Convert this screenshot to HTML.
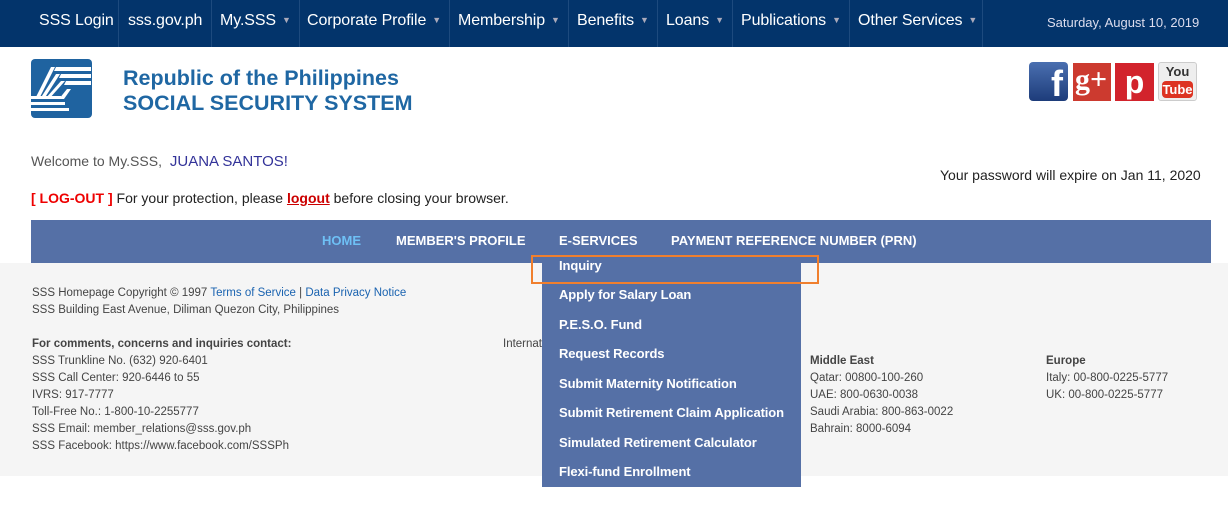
<!DOCTYPE html>
<html><head><meta charset="utf-8"><style>
*{margin:0;padding:0;box-sizing:border-box}
body{width:1228px;height:506px;background:#fff;font-family:"Liberation Sans",Arial,sans-serif;position:relative;overflow:hidden}
.a{position:absolute;white-space:nowrap}
#top{position:absolute;left:0;top:0;width:1228px;height:47px;background:#03346b}
.ni{position:absolute;top:0;height:47px;line-height:41px;color:#fff;font-size:16px;padding-left:0;letter-spacing:-0.1px}
.sep{position:absolute;top:0;width:1px;height:47px;background:#1d4a7e}
.car{font-size:9px;color:#aab;margin-left:6px;vertical-align:2px}
#foot{position:absolute;left:0;top:263px;width:1228px;height:213px;background:#f5f5f5}
.f{font-size:11.5px;color:#444;line-height:17px}
.mb{position:absolute;color:#fff;font-weight:bold;font-size:13px;top:233px}
.dd{position:absolute;left:559px;color:#fff;font-weight:bold;font-size:13px;letter-spacing:-0.1px}
</style></head><body>
<div id="top">
<span class="ni" style="left:39px">SSS Login</span>
<div class="sep" style="left:118px"></div>
<span class="ni" style="left:128px">sss.gov.ph</span>
<div class="sep" style="left:211px"></div>
<span class="ni" style="left:220px">My.SSS<span class="car">▼</span></span>
<div class="sep" style="left:299px"></div>
<span class="ni" style="left:307px">Corporate Profile<span class="car">▼</span></span>
<div class="sep" style="left:449px"></div>
<span class="ni" style="left:458px">Membership<span class="car">▼</span></span>
<div class="sep" style="left:568px"></div>
<span class="ni" style="left:577px">Benefits<span class="car">▼</span></span>
<div class="sep" style="left:657px"></div>
<span class="ni" style="left:666px">Loans<span class="car">▼</span></span>
<div class="sep" style="left:732px"></div>
<span class="ni" style="left:741px">Publications<span class="car">▼</span></span>
<div class="sep" style="left:849px"></div>
<span class="ni" style="left:858px">Other Services<span class="car">▼</span></span>
<div class="sep" style="left:982px"></div>
<span class="a" style="left:1047px;top:15px;color:#dde;font-size:13px">Saturday, August 10, 2019</span>
</div>
<svg class="a" style="left:31px;top:59px" width="61" height="59" viewBox="0 0 61 59">
<rect width="61" height="59" rx="4" fill="#1f63a0"/>
<g fill="#fff"><polygon points="25,8 60,8 60,12 23,12"/><polygon points="30,15 60,15 60,19 28,19"/><polygon points="35,22 60,22 60,26 33,26"/>
<polygon points="20,8 24,8 8,40 4,40"/><polygon points="25,15 29,15 13,40 9,40"/><polygon points="30,22 34,22 18,40 14,40"/>
<rect x="0" y="37" width="30" height="3"/><rect x="0" y="43" width="34" height="3"/><rect x="0" y="49" width="38" height="3"/>
<polygon points="28,40 33,40 40,30 36,30"/></g></svg>
<span class="a" style="left:123px;top:66px;color:#1f67a3;font-size:21.5px;font-weight:bold">Republic of the Philippines</span>
<span class="a" style="left:123px;top:91px;color:#1f67a3;font-size:21.5px;font-weight:bold">SOCIAL SECURITY SYSTEM</span>
<div class="a" style="left:1029px;top:62px;width:39px;height:39px;border-radius:4px;background:linear-gradient(#4a6fb0,#1d3c7a);color:#fff;font-size:36px;font-weight:bold;text-align:right;padding-right:5px;line-height:44px;overflow:hidden">f</div>
<div class="a" style="left:1073px;top:63px;width:38px;height:38px;background:#cc3a2f;color:#fff;font-size:30px;font-weight:bold;line-height:34px;font-family:'Liberation Serif',serif;padding-left:2px">g+</div>
<div class="a" style="left:1115px;top:63px;width:39px;height:38px;background:#d2232c;color:#fff;font-size:32px;font-weight:bold;line-height:38px;text-align:center">p</div>
<div class="a" style="left:1158px;top:62px;width:39px;height:39px;background:#eee;border:1px solid #ccc;border-radius:3px;text-align:center;font-size:13px;font-weight:bold;color:#333;line-height:14px;padding-top:2px">You<div style="background:#d32;color:#fff;border-radius:4px;margin:2px 3px 0;font-size:13px;line-height:17px">Tube</div></div>
<span class="a" style="left:31px;top:153px;font-size:14px;color:#555">Welcome to My.SSS, <span style="color:#333399;font-size:15px;margin-left:4px">JUANA SANTOS!</span></span>
<span class="a" style="left:940px;top:167px;font-size:14px;color:#222">Your password will expire on Jan 11, 2020</span>
<span class="a" style="left:31px;top:190px;font-size:14px;color:#222"><b style="color:#e00">[ LOG-OUT ]</b> For your protection, please <b style="color:#c00;text-decoration:underline">logout</b> before closing your browser.</span>
<div id="foot"></div>
<div class="a" style="left:31px;top:220px;width:1180px;height:43px;background:#5570a6"></div>
<span class="mb" style="left:322px;color:#6ec0f5">HOME</span>
<span class="mb" style="left:396px">MEMBER'S PROFILE</span>
<span class="mb" style="left:559px">E-SERVICES</span>
<span class="mb" style="left:671px">PAYMENT REFERENCE NUMBER (PRN)</span>
<div class="a f" style="left:32px;top:285px">SSS Homepage Copyright © 1997 <span style="color:#1a63b0">Terms of Service</span> | <span style="color:#1a63b0">Data Privacy Notice</span><br>SSS Building East Avenue, Diliman Quezon City, Philippines</div>
<div class="a f" style="left:32px;top:336px"><b>For comments, concerns and inquiries contact:</b><br>SSS Trunkline No. (632) 920-6401<br>SSS Call Center: 920-6446 to 55<br>IVRS: 917-7777<br>Toll-Free No.: 1-800-10-2255777<br>SSS Email: member_relations@sss.gov.ph<br>SSS Facebook: https://www.facebook.com/SSSPh</div>
<div class="a f" style="left:503px;top:336px">International</div>
<div class="a f" style="left:810px;top:353px"><b>Middle East</b><br>Qatar: 00800-100-260<br>UAE: 800-0630-0038<br>Saudi Arabia: 800-863-0022<br>Bahrain: 8000-6094</div>
<div class="a f" style="left:1046px;top:353px"><b>Europe</b><br>Italy: 00-800-0225-5777<br>UK: 00-800-0225-5777</div>
<div class="a" style="left:542px;top:253px;width:259px;height:234px;background:#5570a6"></div>
<div class="a" style="left:531px;top:255px;width:288px;height:29px;border:2px solid #f07f2d"></div>
<span class="dd" style="top:258px">Inquiry</span>
<span class="dd" style="top:287px">Apply for Salary Loan</span>
<span class="dd" style="top:317px">P.E.S.O. Fund</span>
<span class="dd" style="top:346px">Request Records</span>
<span class="dd" style="top:376px">Submit Maternity Notification</span>
<span class="dd" style="top:405px">Submit Retirement Claim Application</span>
<span class="dd" style="top:435px">Simulated Retirement Calculator</span>
<span class="dd" style="top:464px">Flexi-fund Enrollment</span>
</body></html>
